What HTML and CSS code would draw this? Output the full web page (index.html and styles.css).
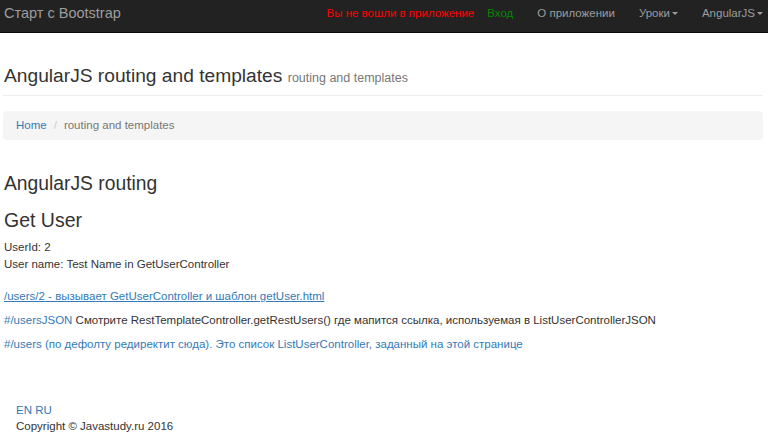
FILE: index.html
```html
<!DOCTYPE html>
<html lang="ru">
<head>
<meta charset="utf-8">
<title>AngularJS routing and templates</title>
<link rel="stylesheet" href="styles.css">
</head>
<body>
<nav class="navbar">
  <a class="brand" href="#">Старт с Bootstrap</a>
  <div class="nav-right">
    <span class="nav-status">Вы не вошли в приложение</span>
    <a class="nav-login" href="#">Вход</a>
    <a class="nav-link" href="#">О приложении</a>
    <a class="nav-link" href="#">Уроки<span class="caret"></span></a>
    <a class="nav-link last" href="#">AngularJS<span class="caret"></span></a>
  </div>
</nav>
<main class="container">
  <div class="page-header">
    <h1 class="title">AngularJS routing and templates <small class="subtitle">routing and templates</small></h1>
  </div>
  <ol class="breadcrumb">
    <li><a href="#">Home</a></li>
    <li class="sep">/</li>
    <li class="active">routing and templates</li>
  </ol>
  <h2 class="section">AngularJS routing</h2>
  <h3 class="sub">Get User</h3>
  <div class="user">
    <div>UserId: 2</div>
    <div>User name: Test Name in GetUserController</div>
  </div>
  <p class="line"><a class="ul" href="#">/users/2 - вызывает GetUserController и шаблон getUser.html</a></p>
  <p class="line"><a href="#">#/usersJSON</a> Смотрите RestTemplateController.getRestUsers() где мапится ссылка, используемая в ListUserControllerJSON</p>
  <p class="line"><a href="#">#/users (по дефолту редиректит сюда). Это список ListUserController, заданный на этой странице</a></p>
</main>
<footer class="footer">
  <div><a href="#">EN</a> <a href="#">RU</a></div>
  <div>Copyright © Javastudy.ru 2016</div>
</footer>
</body>
</html>
```
FILE: styles.css
```css
html, body {
  margin: 0;
  padding: 0;
  background: #fff;
}
body {
  font-family: "Liberation Sans", Arial, sans-serif;
  font-size: 11.5px;
  line-height: 17px;
  color: #333;
}
a {
  color: #337ab7;
  text-decoration: none;
}
.navbar {
  display: flex;
  justify-content: space-between;
  align-items: flex-start;
  height: 32px;
  background: #222;
  border-bottom: 1px solid #080808;
  padding: 0 5px 0 4px;
}
.brand {
  color: #9d9d9d;
  font-size: 14.5px;
  line-height: 18px;
  padding-top: 4px;
}
.nav-right {
  display: flex;
  align-items: flex-start;
  padding-top: 5px;
  font-size: 11.5px;
  line-height: 16px;
}
.nav-status {
  color: #f00;
  margin-right: 13px;
}
.nav-login {
  color: #080;
  padding-right: 12px;
}
.nav-link {
  color: #9d9d9d;
  padding: 0 12px;
  display: flex;
  align-items: center;
}
.nav-link.last {
  padding-right: 0;
}
.caret {
  display: inline-block;
  width: 0;
  height: 0;
  margin-left: 2px;
  margin-top: 1px;
  border-top: 3px solid #9d9d9d;
  border-left: 3px solid transparent;
  border-right: 3px solid transparent;
}
.container {
  padding: 0 5px 0 3px;
}
.page-header {
  margin-top: 31px;
  padding-bottom: 5px;
  border-bottom: 1px solid #eee;
}
.title {
  margin: 0;
  font-size: 19.2px;
  line-height: 24px;
  font-weight: 500;
  color: #333;
  padding-left: 1px;
}
.subtitle {
  font-size: 12.5px;
  color: #777;
  font-weight: 400;
}
.breadcrumb {
  display: flex;
  list-style: none;
  margin: 15px 0 0;
  padding: 6px 13px;
  background: #f5f5f5;
  border-radius: 4px;
  line-height: 17px;
}
.breadcrumb .sep {
  color: #ccc;
  padding: 0 7px;
}
.breadcrumb .active {
  color: #777;
}
.section {
  margin: 32px 0 0;
  font-size: 19.3px;
  line-height: 24px;
  font-weight: 500;
  padding-left: 1px;
}
.sub {
  margin: 12px 0 0;
  font-size: 19.5px;
  line-height: 24px;
  font-weight: 500;
  padding-left: 1px;
}
.user {
  margin-top: 7px;
  padding-left: 1px;
}
.line {
  margin: 0;
  padding-left: 1px;
}
.user + .line {
  margin-top: 15px;
}
.line + .line {
  margin-top: 7px;
}
.ul {
  text-decoration: underline;
}
.footer {
  margin-top: 49px;
  padding-left: 16px;
  line-height: 16px;
}
```
